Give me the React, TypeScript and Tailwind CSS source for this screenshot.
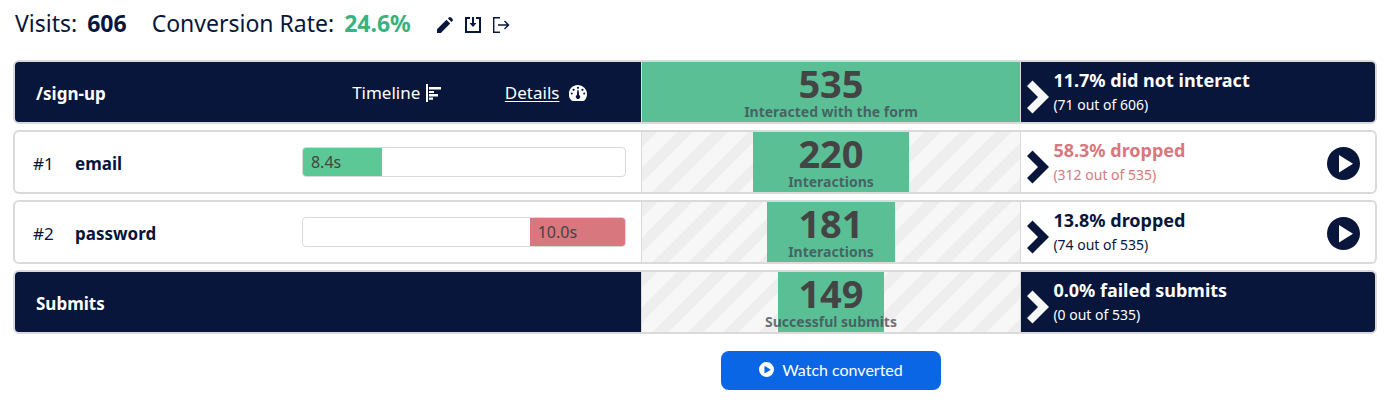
import React from 'react';

interface DropInfo {
  title: string;
  detail: string;
  highlight?: boolean;
}

interface Step {
  id: number;
  name: string;
  time: string;
  timeClass: string;
  timeWidth: number;
  count: number;
  drop: DropInfo;
}

const TOTAL = 535;

const STEPS: Step[] = [
  {
    id: 1,
    name: 'email',
    time: '8.4s',
    timeClass: 'bg-[#5bc896]',
    timeWidth: 24.5,
    count: 220,
    drop: { title: '58.3% dropped', detail: '(312 out of 535)', highlight: true },
  },
  {
    id: 2,
    name: 'password',
    time: '10.0s',
    timeClass: 'bg-[#d8777d] ml-auto',
    timeWidth: 29.5,
    count: 181,
    drop: { title: '13.8% dropped', detail: '(74 out of 535)' },
  },
];

const PencilIcon = () => (
  <svg width="18" height="18" viewBox="0 0 18 18" fill="currentColor" aria-hidden="true">
    <path d="M1 13.2 10.4 3.8l3.8 3.8L4.8 17H1.6a.6.6 0 0 1-.6-.6z" />
    <path d="m11.9 2.5 1-1a1.6 1.6 0 0 1 2.2 0l1.4 1.4a1.6 1.6 0 0 1 0 2.2l-1 1z" />
  </svg>
);

const DownloadIcon = () => (
  <svg width="18" height="18" viewBox="0 0 18 18" fill="none" stroke="currentColor" strokeWidth="2" aria-hidden="true">
    <path d="M6 2H2v14h14V2h-4" />
    <path d="M9 1v8" />
    <path d="M5.5 7h7L9 11z" fill="currentColor" stroke="none" />
  </svg>
);

const ExportIcon = () => (
  <svg width="18" height="18" viewBox="0 0 18 18" fill="none" stroke="currentColor" strokeWidth="1.4" aria-hidden="true">
    <path d="M8 1.7H1.7v14.6H8" />
    <path d="M6 9h10.5M12.5 5l4 4-4 4" />
  </svg>
);

const TimelineIcon = () => (
  <svg width="16" height="18" viewBox="0 0 16 18" fill="currentColor" aria-hidden="true">
    <path d="M0 0h2v18H0zM3 3h12v2.6H3zM3 7h5v2H3zM3 10h9v2.4H3zM3 13.4h4v2.4H3z" />
  </svg>
);

const GaugeIcon = () => (
  <svg width="18" height="16" viewBox="0 0 18 16" aria-hidden="true">
    <path
      d="M9 0a9 9 0 0 1 9 9c0 2.4-.9 4.6-2.3 6.2-.4.5-1 .8-1.7.8H4c-.7 0-1.3-.3-1.7-.8A9 9 0 0 1 9 0z"
      fill="currentColor"
    />
    <g fill="#07163a">
      <circle cx="2.8" cy="8.4" r="1" />
      <circle cx="4.6" cy="4.8" r="1.1" />
      <circle cx="9" cy="2.8" r="1.1" />
      <circle cx="13.4" cy="4.8" r="1.1" />
      <circle cx="15.2" cy="8.4" r="1" />
      <path d="M8.3 5.2h1.4l.4 4.8a2.1 2.1 0 1 1-2.2 0z" />
    </g>
  </svg>
);

const ChevronIcon = () => (
  <svg width="22" height="34" viewBox="0 0 22 34" fill="currentColor" aria-hidden="true">
    <path d="M0 6 5.5.5 22 17 5.5 33.5 0 28l11-11z" />
  </svg>
);

const PlayIcon: React.FC<{ size: number }> = ({ size }) => (
  <svg width={size} height={size} viewBox="0 0 33 33" fill="currentColor" aria-hidden="true">
    <path fillRule="evenodd" d="M16.5 0a16.5 16.5 0 1 1 0 33 16.5 16.5 0 0 1 0-33zM12 8v17.5l14-8.7z" />
  </svg>
);

const Row: React.FC<{ dark?: boolean; children: React.ReactNode }> = ({ dark, children }) => (
  <div
    className={`grid grid-cols-[46fr_28fr_26fr] h-16 rounded-md border-2 border-[#dadada] ${
      dark ? 'bg-[#07163a] text-white' : 'bg-white'
    }`}
  >
    {children}
  </div>
);

const Funnel: React.FC<{ count: number; label: string }> = ({ count, label }) => (
  <div className="grid min-w-0 border-x border-[#dadada] bg-[repeating-linear-gradient(135deg,#eeeeee_0_11px,#f7f7f7_11px_25px)]">
    <div
      className="col-start-1 row-start-1 justify-self-center bg-[#5bbf96]"
      style={{ width: `${(count / TOTAL) * 100}%` }}
    />
    <div className="col-start-1 row-start-1 flex flex-col items-center font-bold">
      <span className="text-[38px] leading-[42px] text-[#444444]">{count}</span>
      <span className="text-sm leading-4 text-[#404452]/75">{label}</span>
    </div>
  </div>
);

const Drop: React.FC<{ info: DropInfo; dark?: boolean; play?: boolean }> = ({ info, dark, play }) => (
  <div className="flex items-center min-w-0 pl-1.5 pr-[15px]">
    <span className={`mt-2.5 shrink-0 ${dark ? 'text-[#f7f7f7]' : ''}`}>
      <ChevronIcon />
    </span>
    <div className={`ml-1 flex-1 whitespace-nowrap ${info.highlight ? 'text-[#d8777d]' : ''}`}>
      <div className="text-lg leading-6 font-bold">{info.title}</div>
      <div className="text-sm leading-[25px]">{info.detail}</div>
    </div>
    {play && (
      <button type="button" aria-label="Watch recordings" className="mt-0.5 cursor-pointer">
        <PlayIcon size={33} />
      </button>
    )}
  </div>
);

export default function App() {
  return (
    <main className="px-[13px] pb-4 font-['Noto_Sans',sans-serif] text-[#07163a]">
      <header className="flex items-center h-[46px] mb-3.5 pl-0.5 text-[23px] whitespace-nowrap">
        <span>Visits:</span>
        <strong className="ml-2.5">606</strong>
        <span className="ml-[25px]">Conversion Rate:</span>
        <strong className="ml-2.5 text-[#36b37e]">24.6%</strong>
        <div className="flex gap-2.5 ml-[25px] mt-1">
          <button type="button" aria-label="Edit"><PencilIcon /></button>
          <button type="button" aria-label="Download"><DownloadIcon /></button>
          <button type="button" aria-label="Export"><ExportIcon /></button>
        </div>
      </header>

      <section className="flex flex-col gap-1.5">
        <Row dark>
          <div className="flex items-center">
            <h2 className="w-[46%] pt-1 pl-[21px] text-[17px] font-bold">/sign-up</h2>
            <nav className="flex flex-1 px-5 pt-0.5 text-[17px]">
              <a href="#timeline" className="flex flex-1 items-center justify-center gap-1.5">
                Timeline <TimelineIcon />
              </a>
              <a href="#details" className="flex flex-1 items-center justify-center gap-2.5">
                <span className="underline underline-offset-2">Details</span>
                <GaugeIcon />
              </a>
            </nav>
          </div>
          <Funnel count={TOTAL} label="Interacted with the form" />
          <Drop dark info={{ title: '11.7% did not interact', detail: '(71 out of 606)' }} />
        </Row>

        {STEPS.map((step) => (
          <Row key={step.id}>
            <div className="flex items-center pr-[15px] text-[17px]">
              <div className="flex w-[47%] pt-1 pl-[18px]">
                <span className="w-[42px]">#{step.id}</span>
                <strong>{step.name}</strong>
              </div>
              <div className="flex flex-1 h-[30px] rounded-sm border border-[#dadada] overflow-hidden">
                <div
                  className={`flex items-center pl-2 text-base text-[#444444] ${step.timeClass}`}
                  style={{ width: `${step.timeWidth}%` }}
                >
                  {step.time}
                </div>
              </div>
            </div>
            <Funnel count={step.count} label="Interactions" />
            <Drop info={step.drop} play />
          </Row>
        ))}

        <Row dark>
          <div className="flex items-center">
            <h2 className="pt-1 pl-[21px] text-[17px] font-bold">Submits</h2>
          </div>
          <Funnel count={149} label="Successful submits" />
          <Drop dark info={{ title: '0.0% failed submits', detail: '(0 out of 535)' }} />
        </Row>
      </section>

      <div className="grid grid-cols-[46fr_28fr_26fr] mt-[17px] px-0.5">
        <button
          type="button"
          className="col-start-2 justify-self-center flex items-center justify-center gap-2 w-[220px] h-[39px] pb-0.5 rounded-lg bg-[#0b66e6] font-['Lato',sans-serif] text-base text-white"
        >
          <PlayIcon size={15} />
          Watch converted
        </button>
      </div>
    </main>
  );
}
